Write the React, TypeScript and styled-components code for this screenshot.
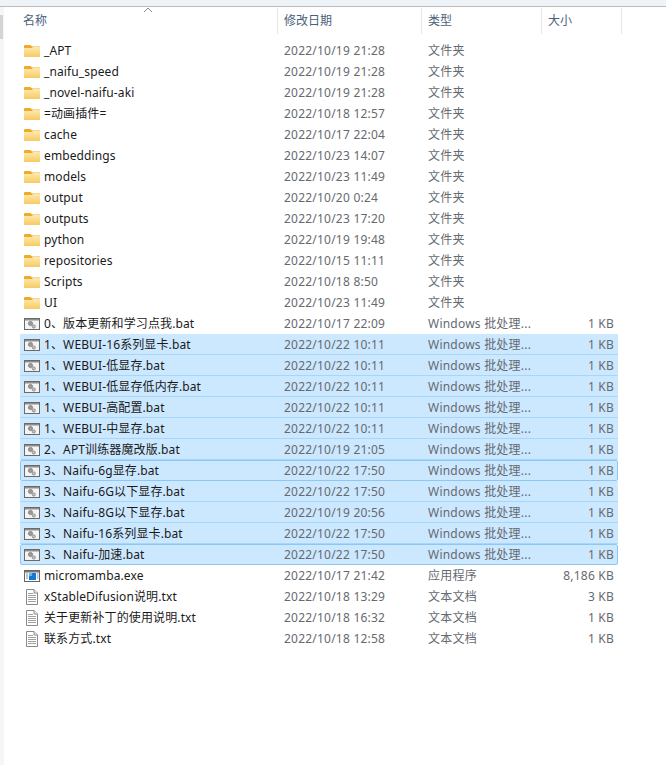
import React from 'react';
import styled, { createGlobalStyle } from 'styled-components';

const GlobalStyle = createGlobalStyle`
  html, body {
    margin: 0;
    padding: 0;
    background: #fff;
  }
  body {
    font-family: "Noto Sans", "Noto Sans CJK SC", sans-serif;
    font-size: 12px;
  }
`;

const Page = styled.div`
  width: 666px;
  height: 765px;
  overflow: hidden;
  display: flex;
  flex-direction: column;
  background: #fff;
`;

const TopStrip = styled.div`
  height: 6px;
  flex: none;
  background: #eef3f8;
  border-bottom: 1px solid #bcbcbc;
`;

const Body = styled.div`
  flex: 1;
  display: flex;
`;

const Rail = styled.div`
  width: 4px;
  flex: none;
  background: #f6f6f6;
  padding-top: 8px;
`;

const RailThumb = styled.div`
  width: 3px;
  height: 24px;
  background: #d4d4d4;
`;

const Main = styled.div`
  flex: 1;
  min-width: 0;
`;

const HeaderRow = styled.div`
  position: relative;
  display: grid;
  grid-template-columns: 274px 144px 120px 80px;
  height: 26px;
  margin-top: 1px;
`;

const HeaderCell = styled.div<{ $first?: boolean }>`
  box-sizing: border-box;
  padding-left: ${(p) => (p.$first ? '19px' : '6px')};
  border-right: 1px solid #e5e5e5;
  color: #4c607a;
  line-height: 25px;
  font-size: 12px;
`;

const SortMark = styled.svg`
  position: absolute;
  left: 139px;
  top: -1px;
`;

const List = styled.div`
  margin-top: 6px;
  width: 598px;
  margin-left: 16px;
`;

const Row = styled.div<{ $selected?: boolean; $focused?: boolean }>`
  box-sizing: border-box;
  height: 21px;
  display: grid;
  grid-template-columns: 23px 240px 144px 120px 69px;
  align-items: center;
  border: 1px solid transparent;
  border-bottom-color: ${(p) => (p.$selected ? '#a5d6fb' : 'transparent')};
  background: ${(p) => (p.$selected ? '#cce8ff' : 'transparent')};
  ${(p) => p.$focused && 'border: 1px solid #8cc8f5; border-radius: 2px;'}
`;

const IconCell = styled.div`
  display: flex;
  padding-left: 3px;
`;

const NameCell = styled.div`
  color: #1a1a1a;
  white-space: nowrap;
  letter-spacing: 0.12px;
  padding-bottom: 2px;
`;

const DimCell = styled.div`
  color: #666a70;
  white-space: nowrap;
  letter-spacing: 0.22px;
  padding-bottom: 2px;
`;

const SizeCell = styled(DimCell)`
  text-align: right;
  padding-right: 3px;
`;

const FolderIcon = () => (
  <svg width="16" height="16" viewBox="0 0 16 16">
    <defs>
      <linearGradient id="folderBody" x1="0" y1="0" x2="0" y2="1">
        <stop offset="0" stopColor="#fde9ae" />
        <stop offset="1" stopColor="#f7cb63" />
      </linearGradient>
    </defs>
    <path d="M0 3 Q0 2 1 2 H6.5 L8 3.5 H16 V6 H0 Z" fill="#f0ab26" />
    <path d="M0 5 L8 5 L9 4 H16 V14 H0 Z" fill="url(#folderBody)" />
  </svg>
);

const BatIcon = () => (
  <svg width="16" height="16" viewBox="0 0 16 16">
    <rect x="0.5" y="2.5" width="15" height="11" fill="#f4f4f4" stroke="#6a6a6a" />
    <rect x="1" y="3" width="14" height="1.5" fill="#8e8e8e" />
    <circle cx="6.5" cy="7.5" r="2.1" fill="#9c9c9c" stroke="#707070" strokeWidth="0.7" />
    <circle cx="9.8" cy="10.5" r="1.6" fill="#c0c0c0" stroke="#7c7c7c" strokeWidth="0.7" />
  </svg>
);

const ExeIcon = () => (
  <svg width="16" height="16" viewBox="0 0 16 16">
    <rect x="0.5" y="2.5" width="15" height="11" fill="#fff" stroke="#666" />
    <rect x="1" y="3" width="14" height="1.5" fill="#777" />
    <rect x="5" y="5" width="7" height="7" fill="#1479d4" />
    <rect x="5" y="5" width="3" height="3" fill="#62b6f0" />
    <path d="M2 6 H4 M2 8 H4 M2 10 H4 M13 6 H14.5 M13 8 H14.5 M13 10 H14.5" stroke="#8a8a8a" />
  </svg>
);

const TxtIcon = () => (
  <svg width="16" height="16" viewBox="0 0 16 16">
    <path d="M2.5 0.5 H10 L13.5 4 V15.5 H2.5 Z" fill="#fff" stroke="#8a8a8a" />
    <path d="M10 0.5 V4 H13.5" fill="#eee" stroke="#8a8a8a" />
    <path d="M4 4.5 H9 M4 6.5 H12 M4 8.5 H12 M4 10.5 H12 M4 12.5 H12" stroke="#a0a0a0" />
  </svg>
);

type Kind = 'folder' | 'bat' | 'exe' | 'txt';

const icons: Record<Kind, React.FC> = {
  folder: FolderIcon,
  bat: BatIcon,
  exe: ExeIcon,
  txt: TxtIcon,
};

const typeLabels: Record<Kind, string> = {
  folder: '文件夹',
  bat: 'Windows 批处理...',
  exe: '应用程序',
  txt: '文本文档',
};

type Item = {
  name: string;
  date: string;
  kind: Kind;
  size?: string;
  selected?: boolean;
  focused?: boolean;
};

const items: Item[] = [
  { name: '_APT', date: '2022/10/19 21:28', kind: 'folder' },
  { name: '_naifu_speed', date: '2022/10/19 21:28', kind: 'folder' },
  { name: '_novel-naifu-aki', date: '2022/10/19 21:28', kind: 'folder' },
  { name: '=动画插件=', date: '2022/10/18 12:57', kind: 'folder' },
  { name: 'cache', date: '2022/10/17 22:04', kind: 'folder' },
  { name: 'embeddings', date: '2022/10/23 14:07', kind: 'folder' },
  { name: 'models', date: '2022/10/23 11:49', kind: 'folder' },
  { name: 'output', date: '2022/10/20 0:24', kind: 'folder' },
  { name: 'outputs', date: '2022/10/23 17:20', kind: 'folder' },
  { name: 'python', date: '2022/10/19 19:48', kind: 'folder' },
  { name: 'repositories', date: '2022/10/15 11:11', kind: 'folder' },
  { name: 'Scripts', date: '2022/10/18 8:50', kind: 'folder' },
  { name: 'UI', date: '2022/10/23 11:49', kind: 'folder' },
  { name: '0、版本更新和学习点我.bat', date: '2022/10/17 22:09', kind: 'bat', size: '1 KB' },
  { name: '1、WEBUI-16系列显卡.bat', date: '2022/10/22 10:11', kind: 'bat', size: '1 KB', selected: true },
  { name: '1、WEBUI-低显存.bat', date: '2022/10/22 10:11', kind: 'bat', size: '1 KB', selected: true },
  { name: '1、WEBUI-低显存低内存.bat', date: '2022/10/22 10:11', kind: 'bat', size: '1 KB', selected: true },
  { name: '1、WEBUI-高配置.bat', date: '2022/10/22 10:11', kind: 'bat', size: '1 KB', selected: true },
  { name: '1、WEBUI-中显存.bat', date: '2022/10/22 10:11', kind: 'bat', size: '1 KB', selected: true },
  { name: '2、APT训练器魔改版.bat', date: '2022/10/19 21:05', kind: 'bat', size: '1 KB', selected: true },
  { name: '3、Naifu-6g显存.bat', date: '2022/10/22 17:50', kind: 'bat', size: '1 KB', selected: true, focused: true },
  { name: '3、Naifu-6G以下显存.bat', date: '2022/10/22 17:50', kind: 'bat', size: '1 KB', selected: true },
  { name: '3、Naifu-8G以下显存.bat', date: '2022/10/19 20:56', kind: 'bat', size: '1 KB', selected: true },
  { name: '3、Naifu-16系列显卡.bat', date: '2022/10/22 17:50', kind: 'bat', size: '1 KB', selected: true },
  { name: '3、Naifu-加速.bat', date: '2022/10/22 17:50', kind: 'bat', size: '1 KB', selected: true, focused: true },
  { name: 'micromamba.exe', date: '2022/10/17 21:42', kind: 'exe', size: '8,186 KB' },
  { name: 'xStableDifusion说明.txt', date: '2022/10/18 13:29', kind: 'txt', size: '3 KB' },
  { name: '关于更新补丁的使用说明.txt', date: '2022/10/18 16:32', kind: 'txt', size: '1 KB' },
  { name: '联系方式.txt', date: '2022/10/18 12:58', kind: 'txt', size: '1 KB' },
];

const App = () => (
  <Page>
    <GlobalStyle />
    <TopStrip />
    <Body>
      <Rail>
        <RailThumb />
      </Rail>
      <Main>
        <HeaderRow>
          <HeaderCell $first>名称</HeaderCell>
          <HeaderCell>修改日期</HeaderCell>
          <HeaderCell>类型</HeaderCell>
          <HeaderCell>大小</HeaderCell>
          <SortMark width="10" height="6" viewBox="0 0 10 6">
            <path d="M1 5 L5 1 L9 5" fill="none" stroke="#8a8a8a" />
          </SortMark>
        </HeaderRow>
        <List>
          {items.map((item) => {
            const Icon = icons[item.kind];
            return (
              <Row key={item.name} $selected={item.selected} $focused={item.focused}>
                <IconCell>
                  <Icon />
                </IconCell>
                <NameCell>{item.name}</NameCell>
                <DimCell>{item.date}</DimCell>
                <DimCell>{typeLabels[item.kind]}</DimCell>
                <SizeCell>{item.size}</SizeCell>
              </Row>
            );
          })}
        </List>
      </Main>
    </Body>
  </Page>
);

export default App;
